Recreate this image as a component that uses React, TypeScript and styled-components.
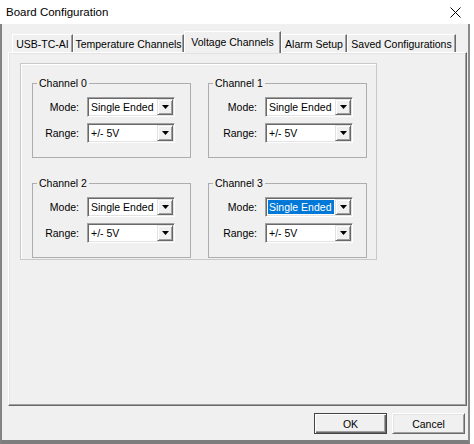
import styled, { createGlobalStyle } from 'styled-components';

const GlobalStyle = createGlobalStyle`
  html, body {
    margin: 0;
    padding: 0;
    background: #fff;
  }
  body {
    font-family: 'Liberation Sans', Arial, sans-serif;
    font-size: 10.5px;
    color: #000;
  }
`;

const Window = styled.div`
  width: 470px;
  height: 444px;
  display: flex;
  flex-direction: column;
`;

const TitleBar = styled.div`
  height: 24px;
  flex: none;
  display: flex;
  align-items: center;
  justify-content: space-between;
  padding: 0 9px 0 6px;
  background: #fff;
  font-size: 11.5px;
`;

const Body = styled.div`
  flex: 1;
  display: flex;
  flex-direction: column;
  background: #f0f0f0;
  border-left: 2px solid #838383;
  border-right: 2px solid #8a8a8a;
  border-bottom: 4px solid #7d7d7d;
  padding: 7px 1px 0 6px;
`;

const TabStrip = styled.div`
  display: flex;
  align-items: flex-end;
  height: 21px;
  padding-left: 4px;
  position: relative;
  z-index: 1;
`;

const Tab = styled.div<{ $w: number; $active?: boolean }>`
  width: ${(p) => p.$w}px;
  height: ${(p) => (p.$active ? '22px' : '18px')};
  margin-bottom: ${(p) => (p.$active ? '-1px' : '0')};
  padding-bottom: ${(p) => (p.$active ? '2px' : '0')};
  box-sizing: border-box;
  display: flex;
  align-items: center;
  justify-content: center;
  white-space: nowrap;
  background: #f0f0f0;
  border-top: 1px solid #fff;
  border-left: 1px solid #fff;
  border-right: 1px solid #6a6a6a;
  box-shadow: inset -1px 0 #a0a0a0;
`;

const Panel = styled.div`
  height: 354px;
  box-sizing: border-box;
  border-top: 1px solid #fff;
  border-left: 1px solid #fff;
  border-right: 1px solid #696969;
  border-bottom: 1px solid #696969;
  box-shadow: inset -1px -1px #a0a0a0, inset 1px 1px #e3e3e3;
  padding: 10px 0 0 11px;
`;

const Frame = styled.div`
  width: 357px;
  box-sizing: border-box;
  display: grid;
  grid-template-columns: 159px 159px;
  column-gap: 17px;
  row-gap: 19px;
  padding: 13px 0 1px 11px;
  border: 1px solid #c8c8c8;
  box-shadow: inset 1px 1px #fff;
`;

const Group = styled.fieldset<{ $indent: number }>`
  margin: 0;
  min-width: 0;
  padding: 8px 0 14px ${(p) => p.$indent}px;
  border: 1px solid #adadad;
  display: flex;
  flex-direction: column;
  gap: 6px;
`;

const Legend = styled.legend<{ $indent: number }>`
  padding: 0 2px;
  margin-left: ${(p) => 4 - p.$indent}px;
  line-height: 12px;
`;

const Field = styled.div`
  display: grid;
  grid-template-columns: 46px 88px;
  column-gap: 8px;
  align-items: center;
`;

const Label = styled.span`
  text-align: right;
`;

const Combo = styled.div`
  width: 88px;
  height: 20px;
  box-sizing: border-box;
  display: flex;
  align-items: center;
  padding: 1px;
  background: #fff;
  border: 1px solid;
  border-color: #a0a0a0 #fff #fff #a0a0a0;
  box-shadow: inset 1px 1px #696969, inset -1px -1px #e3e3e3;
`;

const ComboText = styled.span<{ $selected?: boolean }>`
  flex: 1;
  height: 14px;
  line-height: 14px;
  margin: 0 1px;
  padding-left: 1px;
  white-space: nowrap;
  overflow: hidden;
  background: ${(p) => (p.$selected ? '#0078d7' : 'transparent')};
  color: ${(p) => (p.$selected ? '#fff' : '#000')};
`;

const DropButton = styled.div`
  width: 16px;
  height: 16px;
  flex: none;
  box-sizing: border-box;
  display: flex;
  align-items: center;
  justify-content: center;
  background: #f0f0f0;
  border: 1px solid;
  border-color: #e3e3e3 #696969 #696969 #e3e3e3;
  box-shadow: inset 1px 1px #fff, inset -1px -1px #a0a0a0;
`;

const ButtonRow = styled.div`
  display: flex;
  justify-content: flex-end;
  gap: 5px;
  padding: 7px 2px 0 0;
`;

const Button = styled.div<{ $default?: boolean }>`
  width: 73px;
  height: 21px;
  box-sizing: border-box;
  display: flex;
  align-items: center;
  justify-content: center;
  background: #f0f0f0;
  border: 1px solid;
  border-color: ${(p) => (p.$default ? '#444' : '#fff #696969 #696969 #fff')};
  box-shadow: ${(p) =>
    p.$default
      ? 'inset 1px 1px #fff, inset -1px -1px #696969, inset -2px -2px #a0a0a0'
      : 'inset 1px 1px #e3e3e3, inset -1px -1px #a0a0a0'};
`;

const CloseIcon = () => (
  <svg width="11" height="11" viewBox="0 0 11 11">
    <path d="M0.5 0.5 L10.5 10.5 M10.5 0.5 L0.5 10.5" stroke="#000" strokeWidth="1" fill="none" />
  </svg>
);

const Arrow = () => (
  <svg width="7" height="4" viewBox="0 0 7 4">
    <polygon points="0,0 7,0 3.5,4" fill="#000" />
  </svg>
);

const tabs = [
  { label: 'USB-TC-AI', w: 61 },
  { label: 'Temperature Channels', w: 111 },
  { label: 'Voltage Channels', w: 97, active: true },
  { label: 'Alarm Setup', w: 66 },
  { label: 'Saved Configurations', w: 109 },
];

const ComboBox = ({ value, selected }: { value: string; selected?: boolean }) => (
  <Combo>
    <ComboText $selected={selected}>{value}</ComboText>
    <DropButton>
      <Arrow />
    </DropButton>
  </Combo>
);

const Channel = ({ n, indent, focused }: { n: number; indent: number; focused?: boolean }) => (
  <Group $indent={indent}>
    <Legend $indent={indent}>Channel {n}</Legend>
    <Field>
      <Label>Mode:</Label>
      <ComboBox value="Single Ended" selected={focused} />
    </Field>
    <Field>
      <Label>Range:</Label>
      <ComboBox value="+/- 5V" />
    </Field>
  </Group>
);

export default function App() {
  return (
    <>
      <GlobalStyle />
      <Window>
        <TitleBar>
          <span>Board Configuration</span>
          <CloseIcon />
        </TitleBar>
        <Body>
          <TabStrip>
            {tabs.map((t) => (
              <Tab key={t.label} $w={t.w} $active={t.active}>
                {t.label}
              </Tab>
            ))}
          </TabStrip>
          <Panel>
            <Frame>
              <Channel n={0} indent={0} />
              <Channel n={1} indent={2} />
              <Channel n={2} indent={0} />
              <Channel n={3} indent={2} focused />
            </Frame>
          </Panel>
          <ButtonRow>
            <Button $default>OK</Button>
            <Button>Cancel</Button>
          </ButtonRow>
        </Body>
      </Window>
    </>
  );
}
